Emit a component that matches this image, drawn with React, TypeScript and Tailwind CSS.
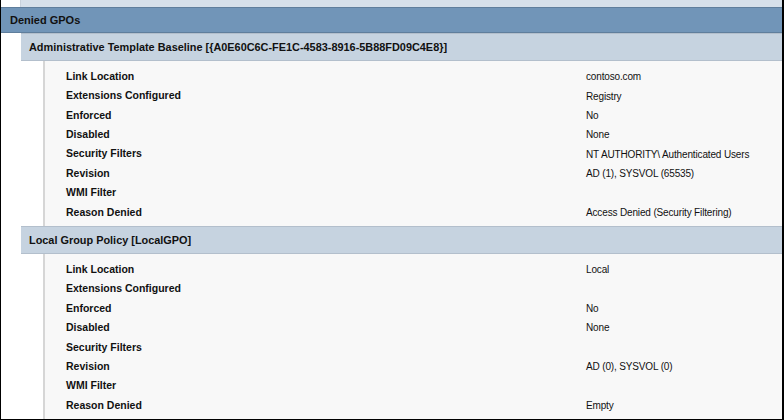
import React from "react";

type Row = { label: string; value: string };

const gpos: { title: string; rows: Row[] }[] = [
  {
    title: "Administrative Template Baseline [{A0E60C6C-FE1C-4583-8916-5B88FD09C4E8}]",
    rows: [
      { label: "Link Location", value: "contoso.com" },
      { label: "Extensions Configured", value: "Registry" },
      { label: "Enforced", value: "No" },
      { label: "Disabled", value: "None" },
      { label: "Security Filters", value: "NT AUTHORITY\\ Authenticated Users" },
      { label: "Revision", value: "AD (1), SYSVOL (65535)" },
      { label: "WMI Filter", value: "" },
      { label: "Reason Denied", value: "Access Denied (Security Filtering)" },
    ],
  },
  {
    title: "Local Group Policy [LocalGPO]",
    rows: [
      { label: "Link Location", value: "Local" },
      { label: "Extensions Configured", value: "" },
      { label: "Enforced", value: "No" },
      { label: "Disabled", value: "None" },
      { label: "Security Filters", value: "" },
      { label: "Revision", value: "AD (0), SYSVOL (0)" },
      { label: "WMI Filter", value: "" },
      { label: "Reason Denied", value: "Empty" },
    ],
  },
];

const GpoBlock = ({ title, rows }: { title: string; rows: Row[] }) => (
  <div>
    <div className="ml-[20px] h-[28px] flex items-center pl-[8px] bg-[#c6d3e0] border-t border-b border-[#b3bfcc] text-[10.9px] font-bold text-[#111]">
      {title}
    </div>
    <div className="ml-[42px] border-l-2 border-[#d6d6d6] bg-[#f8f8f8] pt-[6px] pb-[4px]">
      {rows.map((r) => (
        <div key={r.label} className="h-[19.4px] flex items-center text-[#111]">
          <div className="w-[541px] pl-[21px] font-bold text-[10.5px]">{r.label}</div>
          <div className="text-[10px] tracking-[-0.15px]">{r.value}</div>
        </div>
      ))}
    </div>
  </div>
);

const App = () => {
  return (
    <div
      className="w-[784px] h-[420px] overflow-hidden bg-white border-l border-b border-r-2 border-black flex flex-col"
      style={{ fontFamily: '"Liberation Sans", Arial, sans-serif' }}
    >
      <div className="h-[7px] ml-[19px] bg-[#d6e0ea] border-l border-[#c9d2dc] shrink-0" />
      <div className="h-[26px] shrink-0 flex items-center pl-[9px] bg-[#7195b8] border-t border-b border-[#5f7e9c] text-[11px] font-bold text-[#111]">
        Denied GPOs
      </div>
      {gpos.map((g) => (
        <GpoBlock key={g.title} title={g.title} rows={g.rows} />
      ))}
    </div>
  );
};

export default App;
